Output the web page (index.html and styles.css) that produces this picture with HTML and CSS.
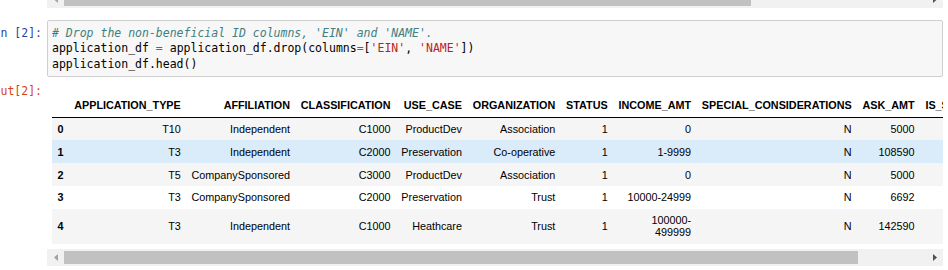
FILE: index.html
```html
<!DOCTYPE html>
<html>
<head>
<meta charset="utf-8">
<title>Notebook</title>
<link rel="stylesheet" href="styles.css">
</head>
<body>
<div class="nb">
  <div class="row prev">
    <div class="prompt"></div>
    <div class="clip-top">
      <div class="hscroll">
        <div class="sb-btn"><svg width="4" height="7" viewBox="0 0 4 7"><path class="arr-off" d="M4 0V7L0 3.5Z"/></svg></div>
        <div class="sb-track"><div class="sb-thumb" style="width:687px"></div></div>
        <div class="sb-btn"><svg width="4" height="7" viewBox="0 0 4 7"><path class="arr-on" d="M0 0V7L4 3.5Z"/></svg></div>
      </div>
    </div>
  </div>

  <div class="row cell-in">
    <div class="prompt in"><span>In&nbsp;[2]:</span></div>
    <div class="input-area"><pre class="code"><span class="c"># Drop the non-beneficial ID columns, 'EIN' and 'NAME'.</span>
application_df <span class="o">=</span> application_df.drop(columns<span class="o">=</span>[<span class="s">'EIN'</span>, <span class="s">'NAME'</span>])
application_df.head()</pre></div>
  </div>

  <div class="row cell-out">
    <div class="prompt out"><span>Out[2]:</span></div>
    <div class="output">
      <div class="output-view">
        <table class="dataframe">
          <thead>
            <tr>
              <th></th>
              <th>APPLICATION_TYPE</th>
              <th>AFFILIATION</th>
              <th>CLASSIFICATION</th>
              <th>USE_CASE</th>
              <th>ORGANIZATION</th>
              <th>STATUS</th>
              <th>INCOME_AMT</th>
              <th>SPECIAL_CONSIDERATIONS</th>
              <th>ASK_AMT</th>
              <th>IS_SUCCESSFUL</th>
            </tr>
          </thead>
          <tbody>
            <tr>
              <th>0</th><td>T10</td><td>Independent</td><td>C1000</td><td>ProductDev</td><td>Association</td><td>1</td><td>0</td><td>N</td><td>5000</td><td>1</td>
            </tr>
            <tr class="hover">
              <th>1</th><td>T3</td><td>Independent</td><td>C2000</td><td>Preservation</td><td>Co-operative</td><td>1</td><td>1-9999</td><td>N</td><td>108590</td><td>1</td>
            </tr>
            <tr>
              <th>2</th><td>T5</td><td>CompanySponsored</td><td>C3000</td><td>ProductDev</td><td>Association</td><td>1</td><td>0</td><td>N</td><td>5000</td><td>0</td>
            </tr>
            <tr>
              <th>3</th><td>T3</td><td>CompanySponsored</td><td>C2000</td><td>Preservation</td><td>Trust</td><td>1</td><td>10000-24999</td><td>N</td><td>6692</td><td>1</td>
            </tr>
            <tr>
              <th>4</th><td>T3</td><td>Independent</td><td>C1000</td><td>Heathcare</td><td>Trust</td><td>1</td><td>100000-499999</td><td>N</td><td>142590</td><td>1</td>
            </tr>
          </tbody>
        </table>
      </div>
      <div class="hscroll">
        <div class="sb-btn"><svg width="4" height="7" viewBox="0 0 4 7"><path class="arr-off" d="M4 0V7L0 3.5Z"/></svg></div>
        <div class="sb-track"><div class="sb-thumb" style="width:794px"></div></div>
        <div class="sb-btn"><svg width="4" height="7" viewBox="0 0 4 7"><path class="arr-on" d="M0 0V7L4 3.5Z"/></svg></div>
      </div>
    </div>
  </div>
</div>
</body>
</html>
```

FILE: styles.css
```css
html, body {
  margin: 0;
  padding: 0;
  background: #ffffff;
}

body {
  font-family: "Liberation Sans", Arial, sans-serif;
  color: #000000;
}

.nb {
  width: 948px;
  height: 270px;
  padding-right: 5px;
  box-sizing: border-box;
  overflow: hidden;
}

.row {
  display: flex;
  align-items: flex-start;
}

.prompt {
  flex: 0 0 47px;
  width: 47px;
  box-sizing: border-box;
  padding-right: 5px;
  display: flex;
  justify-content: flex-end;
  font-family: "DejaVu Sans Mono", "Liberation Mono", monospace;
  font-size: 11.5px;
  line-height: 15.3px;
  white-space: pre;
}

.prompt span {
  flex: none;
}

.prompt.in {
  color: #303f9f;
  padding-top: 6px;
}

.prompt.out {
  color: #d84315;
}

/* previous cell's output scrollbar, only its bottom part visible */
.clip-top {
  flex: 1;
  min-width: 0;
  height: 8px;
  overflow: hidden;
  display: flex;
  flex-direction: column;
  justify-content: flex-end;
}

.cell-in {
  margin-top: 12px;
}

.input-area {
  flex: 1;
  min-width: 0;
  border: 1px solid #cfcfcf;
  border-radius: 2px;
  background: #f7f7f7;
  padding: 5px 4px 4px;
}

.code {
  margin: 0;
  font-family: "DejaVu Sans Mono", "Liberation Mono", monospace;
  font-size: 11.5px;
  line-height: 15.3px;
  color: #000000;
}

.code .c {
  color: #408080;
  font-style: italic;
}

.code .o {
  color: #aa22ff;
}

.code .s {
  color: #ba2121;
}

.cell-out {
  margin-top: 7px;
}

.output {
  flex: 1;
  min-width: 0;
}

.output-view {
  overflow: hidden;
  padding: 10px 0 5px 5px;
}

table.dataframe {
  border-collapse: collapse;
  border-spacing: 0;
  border: none;
  font-family: "Liberation Sans", Arial, sans-serif;
  font-size: 10.8px;
  line-height: 12px;
  color: #000000;
}

table.dataframe th,
table.dataframe td {
  padding: 5.4px;
  text-align: right;
  vertical-align: middle;
  white-space: normal;
  border: none;
}

table.dataframe thead th {
  font-weight: bold;
  border-bottom: 1px solid #000000;
}

table.dataframe tbody th {
  font-weight: bold;
  text-align: left;
}

table.dataframe tbody tr:nth-child(odd) {
  background: #f5f5f5;
}

table.dataframe tbody tr.hover {
  background: #daebfa;
}

/* horizontal scrollbar */
.hscroll {
  display: flex;
  height: 17px;
  background: #f1f1f1;
  flex: none;
}

.sb-btn {
  flex: 0 0 17px;
  display: flex;
  align-items: center;
  justify-content: center;
}

.sb-btn svg {
  display: block;
}

.arr-off {
  fill: #a3a3a3;
}

.arr-on {
  fill: #505050;
}

.sb-track {
  flex: 1;
  display: flex;
  align-items: center;
}

.sb-thumb {
  height: 13px;
  background: #c1c1c1;
}
```
